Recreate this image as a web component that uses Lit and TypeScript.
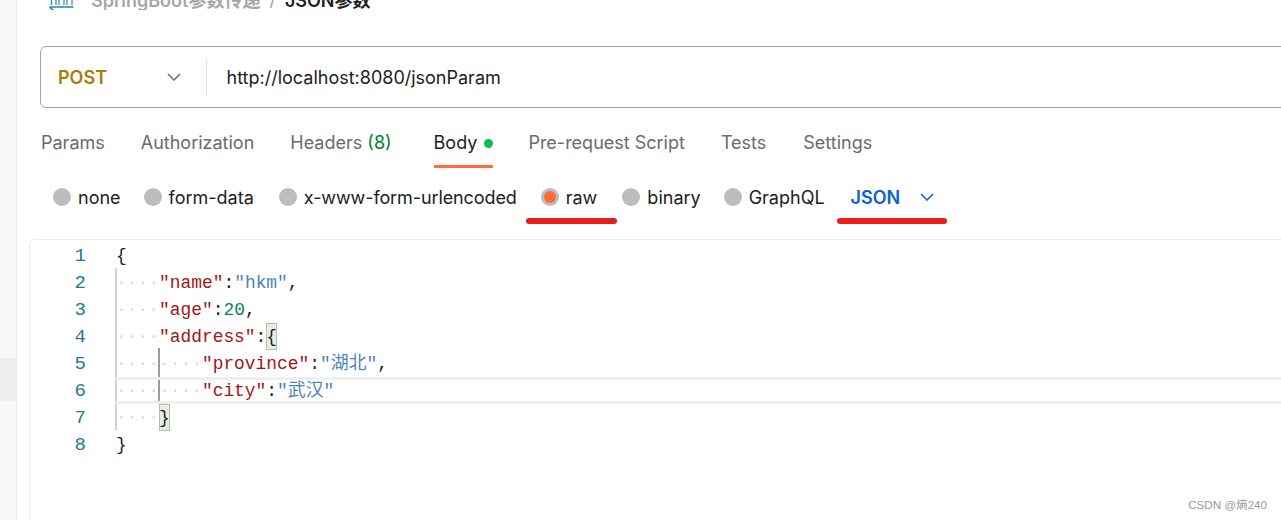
import { LitElement, html, css } from "lit";
import { customElement } from "lit/decorators.js";

const Q = (t: string) => html`<span class="s">${t}</span>`;

@customElement("app-root")
export class AppRoot extends LitElement {
  static styles = css`
    :host { display: flex; width: 1281px; height: 520px; overflow: hidden; background: #fff; font-family: Inter, "Noto Sans CJK SC", sans-serif; position: relative; color: #212121; }
    .side { width: 16px; flex: none; background: #f9f9f9; border-right: 1px solid #ededed; box-sizing: content-box; display: flex; flex-direction: column; padding-top: 358px; }
    .side i { display: block; height: 43px; background: #efefef; }
    .main { flex: 1; min-width: 0; display: flex; flex-direction: column; }
    .crumb { height: 10px; overflow: hidden; display: flex; align-items: flex-end; padding-left: 31px; font-size: 18px; font-weight: 600; }
    .crumb-in { display: flex; align-items: center; gap: 17px; height: 24px; margin-bottom: -1px; flex: none; }
    .crumb svg { display: block; }
    .crumb .a { color: #a6a6a6; }
    .crumb .sl { color: #a6a6a6; font-weight: 400; margin: 0 -8px; }
    .urlbar { margin: 36px 0 0 23px; height: 62px; width: 1260px; flex: none; box-sizing: border-box; border: 1px solid #a6a6a6; border-radius: 6px; display: flex; align-items: center; }
    .method { width: 166px; box-sizing: border-box; padding-left: 17px; height: 36px; display: flex; align-items: center; justify-content: space-between; padding-right: 25px; color: #ad7a03; font-size: 18px; font-weight: 600; border-right: 1px solid #e0e0e0; }
    .url { padding-left: 19.500px; font-size: 18px; color: #212121; }
    .tabs { display: flex; margin: 22px 0 0 24px; gap: 36px; font-size: 18px; color: #6b6b6b; height: 38px; flex: none; }
    .tab { height: 38px; box-sizing: border-box; line-height: 26px; display: flex; align-items: flex-start; gap: 7px; }
    .tab.wide { margin-right: 6px; }
    .tab.on { color: #212121; border-bottom: 3px solid #ff6c37; margin-right: -1px; }
    .tab.t { margin-right: 1px; }
    .tab .n { color: #007f31; }
    .dot { width: 9px; height: 9px; border-radius: 50%; background: #0cbb52; margin-top: 9px; }
    .opts { display: flex; align-items: center; margin: 16px 0 0 36px; height: 26px; flex: none; font-size: 18px; color: #212121; }
    .opt { display: flex; align-items: center; gap: 7px; margin-right: 25px; }
    .opt.first { margin-right: 23px; }
    .opt.tight { letter-spacing: -0.1px; margin-right: 24px; }
    .opt.b { margin-right: 23px; }
    .radio { width: 18px; height: 18px; border-radius: 50%; background: #bdbdbd; position: relative; }
    .radio.on::after { content: ""; position: absolute; left: 3px; top: 3px; width: 12px; height: 12px; border-radius: 50%; background: #ff6c37; }
    .json { display: flex; align-items: center; gap: 20px; color: #0b5fd6; font-weight: 600; margin-left: 1px; }
    .mark { position: absolute; height: 6px; top: 218px; background: #e81e1e; border-radius: 3px; }
    .m1 { left: 526px; width: 91px; }
    .m2 { left: 837px; width: 110px; }
    .editor { flex: 1; margin: 29px 0 0 12px; border: 1px solid #ebebeb; border-right: 0; border-bottom: 0; border-top-left-radius: 6px; font-family: "Liberation Mono", "Noto Sans CJK SC", monospace; font-size: 17.9px; padding-top: 2px; position: relative; }
    .line { display: flex; height: 27px; line-height: 29px; white-space: pre; position: relative; }
    .ln { width: 56px; flex: none; text-align: right; color: #237893; font-size: 19px; }
    .code { flex: 1; margin-left: 30px; color: #212121; display: flex; }
    .cur .code { box-shadow: inset 0 3px 0 0 #efefef, inset 0 -3px 0 0 #efefef; }
    .ws { color: #dcdcdc; }
    .k { color: #a31515; }
    .s { color: #0451a5; opacity: .72; }
    .num { color: #098658; }
    .br { box-sizing: border-box; background: #e6ede4; outline: 1px solid #b9b9b9; outline-offset: -1px; }
    .guide { position: absolute; width: 2px; background: #d3d3d3; }
    .g1 { left: 85px; top: 28px; height: 162px; }
    .g2 { left: 128px; top: 108px; height: 55px; background: #9c9c9c; }
    .wm { position: absolute; right: 14px; bottom: 8px; font-family: "Liberation Sans", "Noto Sans CJK SC", sans-serif; font-size: 11.6px; color: #9a9a9a; }
  `;

  private ln(n: number, body: unknown, cur = false) {
    return html`<div class="line ${cur ? "cur" : ""}"><span class="ln">${n}</span><span class="code">${body}</span></div>`;
  }

  render() {
    const w = (n: number) => html`<span class="ws">${"·".repeat(n)}</span>`;
    const k = (t: string) => html`<span class="k">"${t}"</span>`;
    const chev = (c: string) => html`<svg width="14" height="8" viewBox="0 0 14 8" fill="none" stroke="${c}" stroke-width="1.5"><path d="M1 1l6 6 6-6"/></svg>`;
    return html`
      <div class="side"><i></i></div>
      <div class="main">
        <div class="crumb"><div class="crumb-in">
          <svg width="26" height="24" viewBox="0 0 26 24" fill="none" stroke="#1f8a9e" stroke-width="1.5"><path d="M3.500 10v8M8 13v5M11 10v8M16 10v8M19 10v8M24 13v5" stroke-width="1.200"/><path d="M1.500 20h24M1.500 20l4 3.500"/></svg>
          <span class="a">SpringBoot参数传递</span><span class="sl">/</span><span>JSON参数</span>
        </div></div>
        <div class="urlbar">
          <div class="method"><span>POST</span>${chev("#6b6b6b")}</div>
          <div class="url">http://localhost:8080/jsonParam</div>
        </div>
        <div class="tabs">
          <div class="tab">Params</div>
          <div class="tab">Authorization</div>
          <div class="tab wide"><span>Headers <span class="n">(8)</span></span></div>
          <div class="tab on"><span>Body</span><span class="dot"></span></div>
          <div class="tab">Pre-request Script</div>
          <div class="tab t">Tests</div>
          <div class="tab">Settings</div>
        </div>
        <div class="opts">
          <label class="opt first"><span class="radio"></span>none</label>
          <label class="opt"><span class="radio"></span>form-data</label>
          <label class="opt tight"><span class="radio"></span>x-www-form-urlencoded</label>
          <label class="opt"><span class="radio on"></span>raw</label>
          <label class="opt b"><span class="radio"></span>binary</label>
          <label class="opt"><span class="radio"></span>GraphQL</label>
          <div class="json"><span>JSON</span>${chev("#0b5fd6")}</div>
        </div>
        <div class="editor">
          <span class="guide g1"></span><span class="guide g2"></span>
          ${this.ln(1, "{")}
          ${this.ln(2, html`${w(4)}${k("name")}:${Q('"hkm"')},`)}
          ${this.ln(3, html`${w(4)}${k("age")}:<span class="num">20</span>,`)}
          ${this.ln(4, html`${w(4)}${k("address")}:<span class="br">{</span>`)}
          ${this.ln(5, html`${w(8)}${k("province")}:${Q('"湖北"')},`)}
          ${this.ln(6, html`${w(8)}${k("city")}:${Q('"武汉"')}`, true)}
          ${this.ln(7, html`${w(4)}<span class="br">}</span>`)}
          ${this.ln(8, "}")}
        </div>
      </div>
      <span class="mark m1"></span><span class="mark m2"></span>
      <div class="wm">CSDN @熵240</div>
    `;
  }
}
